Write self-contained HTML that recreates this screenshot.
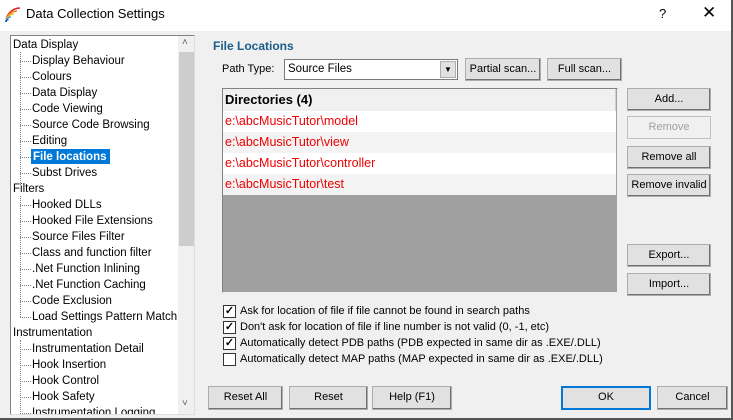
<!DOCTYPE html><html><head><style>
*{margin:0;padding:0;box-sizing:border-box}
html,body{width:733px;height:420px;overflow:hidden}
body{background:#f0f0f0;font-family:"Liberation Sans",sans-serif;font-size:11px;color:#000;position:relative}
.a{position:absolute;white-space:nowrap}
.btn{position:absolute;background:#e1e1e1;border:1px solid #adadad;box-shadow:inset -1px -1px 0 #707070;text-align:center;font-size:11px;line-height:20px}
.btn.dis{color:#a0a0a0;box-shadow:none;border-color:#bfbfbf;background:#f0f0f0}
.ti{position:absolute;left:32px;font-size:11.5px;line-height:14px}
.tl{position:absolute;left:13px;font-size:11.5px;line-height:14px}
.dot{position:absolute;left:20px;width:11px;border-top:1px dotted #808080}
.cb{position:absolute;left:223px;width:13px;height:13px;border:1px solid #333;background:#fff;font-size:11px;line-height:11px;text-align:center;font-weight:bold}
.ct{position:absolute;left:240px;font-size:11px}
.row{position:absolute;left:223px;width:393px;height:21px;color:#e00;font-size:12.5px;line-height:21px;padding-left:2px}
</style></head><body>
<div class="a" style="left:0;top:0;width:733px;height:31px;background:#fff"></div>
<svg class="a" style="left:4px;top:6px" width="18" height="18" viewBox="0 0 18 18"><g fill="none" stroke-width="1.5"><path d="M2 16A14 14 0 0 1 16 2" stroke="#e02020"/><path d="M2 16A11 11 0 0 1 13 5" stroke="#f08020"/><path d="M2 16A8 8 0 0 1 10 8" stroke="#e0c020"/><path d="M2 16A5 5 0 0 1 7 11" stroke="#40a0e0"/><path d="M2 16A2.5 2.5 0 0 1 4.5 13.5" stroke="#2050c0"/></g></svg>
<div class="a" style="left:26px;top:6px;font-size:13px">Data Collection Settings</div>
<div class="a" style="left:659px;top:6px;font-size:13px">?</div>
<div class="a" style="left:702px;top:3px;font-size:17px;font-weight:300">✕</div>
<div class="a" style="left:731px;top:0;width:2px;height:420px;background:#555"></div>
<div class="a" style="left:0;top:418px;width:733px;height:2px;background:#555"></div>

<div class="a" style="left:10px;top:35px;width:185px;height:380px;background:#fff;border:1px solid #828282;border-right-color:#ddd;border-bottom-color:#ddd"></div>
<div class="a" style="left:11px;top:36px;width:183px;height:378px;overflow:hidden">
<div class="a" style="left:-11px;top:-35px;width:200px;height:413px;overflow:hidden">
<div class="tl" style="top:37px">Data Display</div>
<div class="a" style="left:20px;top:51px;height:133px;border-left:1px dotted #808080"></div>
<div class="dot" style="top:60px"></div><div class="ti" style="top:53px">Display Behaviour</div>
<div class="dot" style="top:76px"></div><div class="ti" style="top:69px">Colours</div>
<div class="dot" style="top:92px"></div><div class="ti" style="top:85px">Data Display</div>
<div class="dot" style="top:108px"></div><div class="ti" style="top:101px">Code Viewing</div>
<div class="dot" style="top:124px"></div><div class="ti" style="top:117px">Source Code Browsing</div>
<div class="dot" style="top:140px"></div><div class="ti" style="top:133px">Editing</div>
<div class="dot" style="top:156px"></div><div class="a" style="left:31px;top:148px;width:79px;height:15px;background:#0078d7"></div><div class="ti" style="top:149px;left:33px;color:#fff;font-weight:bold">File locations</div>
<div class="dot" style="top:172px"></div><div class="ti" style="top:165px">Subst Drives</div>
<div class="tl" style="top:181px">Filters</div>
<div class="a" style="left:20px;top:195px;height:121px;border-left:1px dotted #808080"></div>
<div class="dot" style="top:204px"></div><div class="ti" style="top:197px">Hooked DLLs</div>
<div class="dot" style="top:220px"></div><div class="ti" style="top:213px">Hooked File Extensions</div>
<div class="dot" style="top:236px"></div><div class="ti" style="top:229px">Source Files Filter</div>
<div class="dot" style="top:252px"></div><div class="ti" style="top:245px">Class and function filter</div>
<div class="dot" style="top:268px"></div><div class="ti" style="top:261px">.Net Function Inlining</div>
<div class="dot" style="top:284px"></div><div class="ti" style="top:277px">.Net Function Caching</div>
<div class="dot" style="top:300px"></div><div class="ti" style="top:293px">Code Exclusion</div>
<div class="dot" style="top:316px"></div><div class="ti" style="top:309px">Load Settings Pattern Match</div>
<div class="tl" style="top:325px">Instrumentation</div>
<div class="a" style="left:20px;top:339px;height:74px;border-left:1px dotted #808080"></div>
<div class="dot" style="top:348px"></div><div class="ti" style="top:341px">Instrumentation Detail</div>
<div class="dot" style="top:364px"></div><div class="ti" style="top:357px">Hook Insertion</div>
<div class="dot" style="top:380px"></div><div class="ti" style="top:373px">Hook Control</div>
<div class="dot" style="top:396px"></div><div class="ti" style="top:389px">Hook Safety</div>
<div class="dot" style="top:412px"></div><div class="ti" style="top:405px">Instrumentation Logging</div>
</div></div>
<div class="a" style="left:178px;top:36px;width:16px;height:378px;background:#f0f0f0"></div>
<div class="a" style="left:179px;top:52px;width:15px;height:194px;background:#cdcdcd"></div>
<div class="a" style="left:182px;top:37px;font-size:10px;color:#606060">&#x2c4;</div>
<div class="a" style="left:182px;top:398px;font-size:10px;color:#606060">&#x2c5;</div>

<div class="a" style="left:213px;top:39px;font-weight:bold;color:#1a5d8a;font-size:12px">File Locations</div>
<div class="a" style="left:222px;top:63px">Path Type:</div>
<div class="a" style="left:284px;top:59px;width:174px;height:21px;background:#fff;border:1px solid #7a7a7a;padding:3px 3px;font-size:11.5px">Source Files</div>
<div class="a" style="left:440px;top:61px;width:16px;height:17px;background:#e1e1e1;border:1px solid #adadad;text-align:center;font-size:8px;line-height:15px">▼</div>
<div class="btn" style="left:465px;top:58px;width:76px;height:23px">Partial scan...</div>
<div class="btn" style="left:547px;top:58px;width:75px;height:23px">Full scan...</div>

<div class="a" style="left:222px;top:88px;width:396px;height:205px;background:#a0a0a0;border:1px solid #828282;border-right-color:#f0f0f0;border-bottom-color:#f0f0f0"></div>
<div class="a" style="left:223px;top:89px;width:393px;height:22px;background:#f0f0f0;border-right:1px solid #d0d0d0;font-weight:bold;font-size:13px;line-height:22px;padding-left:2px">Directories (4)</div>
<div class="row" style="top:111px;background:#fff">e:\abcMusicTutor\model</div>
<div class="row" style="top:132px;background:#f3f3f3">e:\abcMusicTutor\view</div>
<div class="row" style="top:153px;background:#fff">e:\abcMusicTutor\controller</div>
<div class="row" style="top:174px;background:#f3f3f3">e:\abcMusicTutor\test</div>

<div class="btn" style="left:627px;top:88px;width:84px;height:23px">Add...</div>
<div class="btn dis" style="left:627px;top:116px;width:84px;height:23px">Remove</div>
<div class="btn" style="left:627px;top:146px;width:84px;height:23px">Remove all</div>
<div class="btn" style="left:627px;top:174px;width:84px;height:23px">Remove invalid</div>
<div class="btn" style="left:627px;top:244px;width:84px;height:23px">Export...</div>
<div class="btn" style="left:627px;top:273px;width:84px;height:23px">Import...</div>

<div class="cb" style="top:305px">✓</div><div class="ct" style="top:305px">Ask for location of file if file cannot be found in search paths</div>
<div class="cb" style="top:321px">✓</div><div class="ct" style="top:321px">Don't ask for location of file if line number is not valid (0, -1, etc)</div>
<div class="cb" style="top:337px">✓</div><div class="ct" style="top:337px">Automatically detect PDB paths (PDB expected in same dir as .EXE/.DLL)</div>
<div class="cb" style="top:353px"></div><div class="ct" style="top:353px">Automatically detect MAP paths (MAP expected in same dir as .EXE/.DLL)</div>

<div class="btn" style="left:208px;top:386px;width:75px;height:24px">Reset All</div>
<div class="btn" style="left:289px;top:386px;width:79px;height:24px">Reset</div>
<div class="btn" style="left:372px;top:386px;width:80px;height:24px">Help (F1)</div>
<div class="btn" style="left:561px;top:386px;width:90px;height:24px;border:1px solid #0078d7;box-shadow:inset 0 0 0 1px #0078d7">OK</div>
<div class="btn" style="left:657px;top:386px;width:71px;height:24px">Cancel</div>
</body></html>
